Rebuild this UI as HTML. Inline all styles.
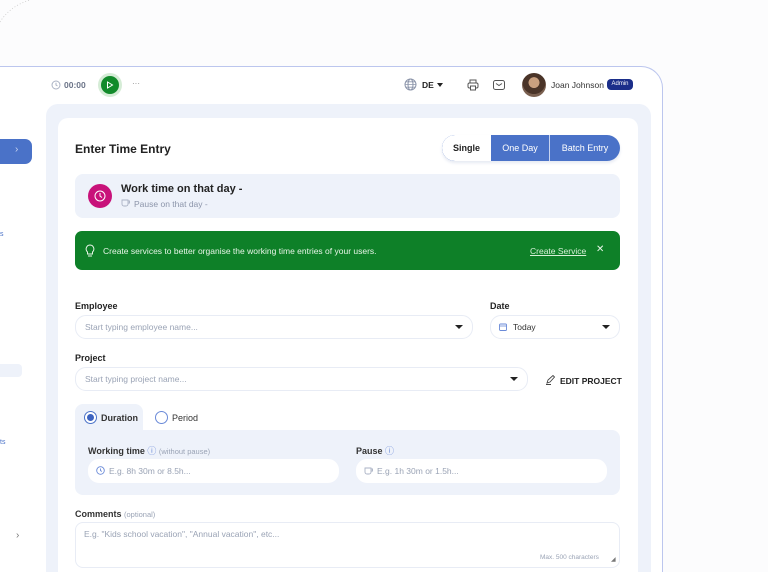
<!DOCTYPE html>
<html><head><meta charset="utf-8">
<style>
*{box-sizing:border-box;margin:0;padding:0}
html,body{width:768px;height:572px;overflow:hidden}
body{background:#fcfcfd;font-family:"Liberation Sans",sans-serif;color:#222}
#w{position:relative;width:768px;height:572px;overflow:hidden}
.a{position:absolute}
.frame{left:0;top:66px;width:663px;height:506px;border:1.5px solid #bcc6ee;border-left:none;border-bottom:none;border-radius:0 22px 0 0;background:#fff}
.panel{left:46px;top:104px;width:605px;height:468px;background:#eef2fa;border-radius:12px 12px 0 0}
.card{left:58px;top:118px;width:580px;height:454px;background:#fff;border-radius:10px 10px 0 0}
.lbl{font-size:9px;font-weight:bold;color:#222}
.inp{border:1px solid #e8ecf5;border-radius:11px;background:#fff;height:24px;font-size:8.5px;color:#9aa3b5;padding-left:9px;line-height:22px}
.caret{position:absolute;right:9px;top:9px;width:0;height:0;border-left:4px solid transparent;border-right:4px solid transparent;border-top:4px solid #222}
</style></head><body><div id="w">
<div class="a frame"></div>
<svg class="a" style="left:0;top:0" width="90" height="40"><path d="M0 22 Q10 6 30 0" stroke="#ccc" stroke-dasharray="1 2" fill="none" stroke-width="0.8"/></svg>
<svg class="a" style="left:51px;top:80px" width="10" height="10" viewBox="0 0 10 10"><circle cx="5" cy="5" r="4" fill="none" stroke="#aab2c4" stroke-width="1"/><path d="M5 2.8V5l1.5 1" stroke="#aab2c4" fill="none"/></svg>
<div class="a" style="left:64px;top:80px;font-size:8.5px;font-weight:bold;color:#6b7488">00:00</div>
<div class="a" style="left:98px;top:73px;width:24px;height:24px;border-radius:50%;background:#d5ecd6"></div>
<div class="a" style="left:101px;top:76px;width:18px;height:18px;border-radius:50%;background:#118a2a"></div>
<svg class="a" style="left:106px;top:81px" width="8" height="8"><path d="M1.5 1L6.5 4 1.5 7z" fill="none" stroke="#fff" stroke-width="1"/></svg>
<div class="a" style="left:132px;top:79px;font-size:8px;color:#888">···</div>
<svg class="a" style="left:404px;top:78px" width="13" height="13" viewBox="0 0 13 13"><circle cx="6.5" cy="6.5" r="5.5" fill="none" stroke="#8c95aa"/><ellipse cx="6.5" cy="6.5" rx="2.5" ry="5.5" fill="none" stroke="#8c95aa"/><path d="M1 6.5h11M2 3.8h9M2 9.2h9" stroke="#8c95aa" stroke-width=".8"/></svg>
<div class="a" style="left:422px;top:80px;font-size:8.5px;font-weight:bold">DE</div>
<div class="a" style="left:437px;top:83px;border-left:3.5px solid transparent;border-right:3.5px solid transparent;border-top:4px solid #222"></div>
<svg class="a" style="left:467px;top:79px" width="12" height="12"><rect x="3" y="1" width="6" height="3" fill="none" stroke="#555"/><rect x="1" y="4" width="10" height="5" rx="1.5" fill="none" stroke="#555"/><rect x="3.5" y="7" width="5" height="4" fill="#fff" stroke="#555"/></svg>
<svg class="a" style="left:493px;top:80px" width="12" height="10"><rect x=".5" y=".5" width="11" height="9" rx="2" fill="none" stroke="#555"/><path d="M3 3.5l3 2 3-2" fill="none" stroke="#555"/></svg>
<div class="a" style="left:522px;top:73px;width:24px;height:24px;border-radius:50%;background:radial-gradient(circle at 50% 40%,#c9a07f 0 28%,#4a3428 30% 60%,#7a6050 62%);"></div>
<div class="a" style="left:551px;top:80px;font-size:8.5px;color:#333">Joan Johnson</div>
<div class="a" style="left:607px;top:79px;width:26px;height:11px;border-radius:4px;background:#1b2e8a;color:#fff;font-size:6px;text-align:center;line-height:11px">Admin</div>
<div class="a" style="left:0;top:139px;width:32px;height:25px;border-radius:0 7px 7px 0;background:#4a72c8"></div>
<div class="a" style="left:15px;top:144px;color:#c8d4f0;font-size:10px">›</div>
<div class="a" style="left:0;top:231px;color:#4a72c8;font-size:7px">s</div>
<div class="a" style="left:0;top:364px;width:22px;height:13px;border-radius:0 4px 4px 0;background:#eef2fa"></div>
<div class="a" style="left:0;top:439px;color:#4a72c8;font-size:7px">ts</div>
<div class="a" style="left:16px;top:530px;color:#777;font-size:10px">›</div>
<div class="a panel"></div>
<div class="a card"></div>
<div class="a" style="left:75px;top:142px;font-size:12px;font-weight:bold;color:#222">Enter Time Entry</div>
<div class="a" style="left:442px;top:135px;width:178px;height:26px;border-radius:13px;background:#4a72c8;overflow:hidden;box-shadow:0 2px 3px #e5e9f2">
 <div class="a" style="left:0;top:0;width:49px;height:26px;background:#fff;border-radius:13px 0 0 13px;font-size:9px;font-weight:bold;text-align:center;line-height:26px;color:#222">Single</div>
 <div class="a" style="left:49px;top:0;width:59px;height:26px;color:#fff;font-size:9px;text-align:center;line-height:26px;border-right:1px solid #c8d4f0">One Day</div>
 <div class="a" style="left:108px;top:0;width:70px;height:26px;color:#fff;font-size:9px;text-align:center;line-height:26px">Batch Entry</div>
</div>
<div class="a" style="left:75px;top:174px;width:545px;height:44px;border-radius:8px;background:#eef2fa"></div>
<div class="a" style="left:88px;top:184px;width:24px;height:24px;border-radius:50%;background:#c8127a"></div>
<svg class="a" style="left:94px;top:190px" width="12" height="12"><circle cx="6" cy="6" r="5" fill="none" stroke="#fff"/><path d="M6 3v3l2 1.5" stroke="#fff" fill="none"/></svg>
<div class="a" style="left:121px;top:183px;font-size:11px;font-weight:bold;color:#222">Work time on that day -</div>
<svg class="a" style="left:121px;top:199px" width="10" height="8"><path d="M1 1h6v4a2 2 0 0 1-2 2H3a2 2 0 0 1-2-2z M7 2h1.5v2H7" fill="none" stroke="#aab2c4" stroke-width=".9"/></svg>
<div class="a" style="left:134px;top:199px;font-size:8.5px;color:#8c95aa">Pause on that day -</div>
<div class="a" style="left:75px;top:231px;width:545px;height:39px;border-radius:7px;background:#0e8028"></div>
<svg class="a" style="left:85px;top:244px" width="10" height="13"><path d="M5 1a4 4 0 0 0-2.5 7V10h5V8A4 4 0 0 0 5 1zM3 12h4" fill="none" stroke="#e6f4e6" stroke-width="1"/></svg>
<div class="a" style="left:103px;top:246px;font-size:8.5px;color:#e8f5e8">Create services to better organise the working time entries of your users.</div>
<div class="a" style="left:530px;top:246px;font-size:8.5px;color:#d8f0d8;text-decoration:underline">Create Service</div>
<div class="a" style="left:596px;top:244px;font-size:10px;color:#e8f5e8">✕</div>
<div class="a lbl" style="left:75px;top:301px">Employee</div>
<div class="a inp" style="left:75px;top:315px;width:398px">Start typing employee name...<span class="caret"></span></div>
<div class="a lbl" style="left:490px;top:301px">Date</div>
<div class="a inp" style="left:490px;top:315px;width:130px;color:#333;padding-left:22px">Today<span class="caret"></span></div>
<svg class="a" style="left:499px;top:323px" width="8" height="8"><rect x=".5" y="1" width="7" height="6.5" rx="1" fill="none" stroke="#6a8ad8" stroke-width=".9"/><path d="M.5 3h7" stroke="#6a8ad8" stroke-width=".8"/></svg>
<div class="a lbl" style="left:75px;top:353px">Project</div>
<div class="a inp" style="left:75px;top:367px;width:453px">Start typing project name...<span class="caret"></span></div>
<svg class="a" style="left:545px;top:375px" width="11" height="10"><path d="M2 8l1-3 5-4.5 1.5 1.5L5 7z M1 9.5h5" fill="none" stroke="#444" stroke-width=".9"/></svg>
<div class="a" style="left:560px;top:376px;font-size:8.5px;font-weight:bold;color:#222">EDIT PROJECT</div>
<div class="a" style="left:75px;top:404px;width:68px;height:30px;border-radius:8px 8px 0 0;background:#eef2fa"></div>
<div class="a" style="left:75px;top:430px;width:545px;height:65px;border-radius:0 8px 8px 8px;background:#eef2fa"></div>
<div class="a" style="left:84px;top:411px;width:13px;height:13px;border-radius:50%;border:1px solid #4a72c8;background:#fff"></div>
<div class="a" style="left:87px;top:414px;width:7px;height:7px;border-radius:50%;background:#3d63c0"></div>
<div class="a" style="left:101px;top:413px;font-size:9px;font-weight:bold;color:#333">Duration</div>
<div class="a" style="left:155px;top:411px;width:13px;height:13px;border-radius:50%;border:1px solid #6a8ad8;background:#fff"></div>
<div class="a" style="left:172px;top:413px;font-size:9px;color:#333">Period</div>
<div class="a" style="left:88px;top:444px;font-size:9px;font-weight:bold;color:#333">Working time <span style="color:#6a8ad8;font-weight:normal">ⓘ</span> <span style="font-weight:normal;color:#9aa3b5;font-size:7.5px">(without pause)</span></div>
<div class="a inp" style="left:88px;top:459px;width:251px;height:24px;border-color:#fff;padding-left:20px">E.g. 8h 30m or 8.5h...</div>
<svg class="a" style="left:96px;top:466px" width="9" height="9"><circle cx="4.5" cy="4.5" r="3.8" fill="none" stroke="#6a8ad8" stroke-width=".9"/><path d="M4.5 2.5v2l1.3 1" stroke="#6a8ad8" fill="none" stroke-width=".9"/></svg>
<div class="a" style="left:356px;top:444px;font-size:9px;font-weight:bold;color:#333">Pause <span style="color:#6a8ad8;font-weight:normal">ⓘ</span></div>
<div class="a inp" style="left:356px;top:459px;width:251px;height:24px;border-color:#fff;padding-left:20px">E.g. 1h 30m or 1.5h...</div>
<svg class="a" style="left:364px;top:467px" width="10" height="8"><path d="M1 1h6v4a2 2 0 0 1-2 2H3a2 2 0 0 1-2-2z M7 2h1.5v2H7" fill="none" stroke="#aab2c4" stroke-width=".9"/></svg>
<div class="a" style="left:75px;top:509px;font-size:9px;font-weight:bold;color:#333">Comments <span style="font-weight:normal;color:#9aa3b5;font-size:7.5px">(optional)</span></div>
<div class="a" style="left:75px;top:522px;width:545px;height:46px;border:1px solid #e8ecf5;border-radius:8px;background:#fff"></div>
<div class="a" style="left:84px;top:529px;font-size:8.5px;color:#9aa3b5">E.g. "Kids school vacation", "Annual vacation", etc...</div>
<div class="a" style="left:540px;top:554px;font-size:6.5px;color:#9aa3b5">Max. 500 characters</div>
<div class="a" style="left:611px;top:556px;font-size:6px;color:#777">◢</div>
</div></body></html>
